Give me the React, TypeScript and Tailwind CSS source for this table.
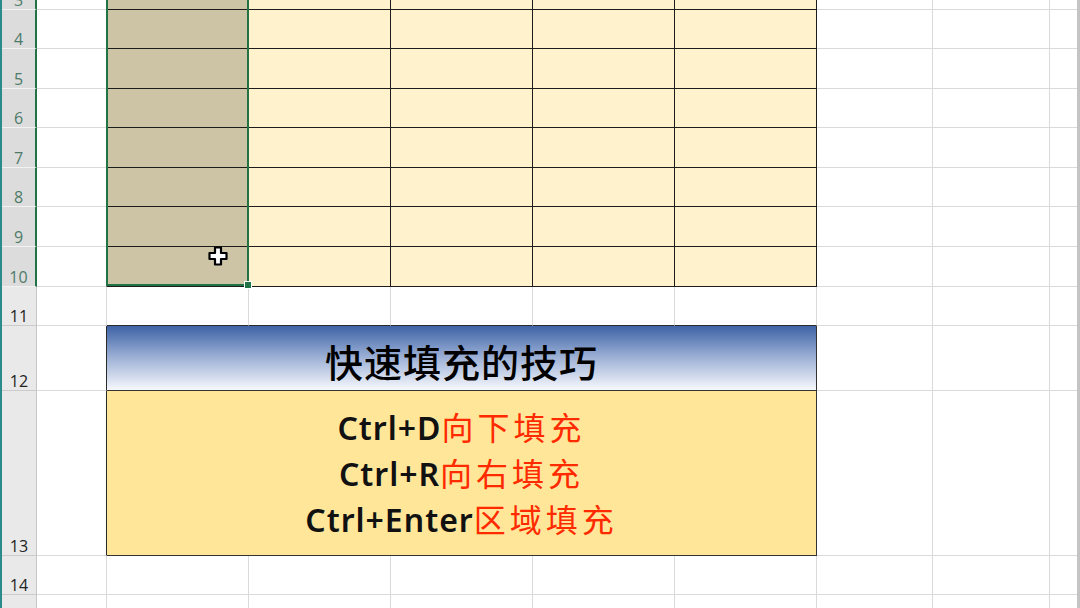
type Row = { n: number; h: number; sel?: boolean };

const rows: Row[] = [
  { n: 3, h: 40, sel: true },
  { n: 4, h: 39, sel: true },
  { n: 5, h: 40, sel: true },
  { n: 6, h: 39, sel: true },
  { n: 7, h: 40, sel: true },
  { n: 8, h: 39, sel: true },
  { n: 9, h: 40, sel: true },
  { n: 10, h: 40, sel: true },
  { n: 11, h: 39 },
  { n: 12, h: 65 },
  { n: 13, h: 165 },
  { n: 14, h: 39 },
  { n: 15, h: 40 },
];

const cols = [1, 2, 3, 4, 5, 6, 7, 8, 9];

const RowHeader = ({ row }: { row: Row }) => (
  <div
    className={
      row.sel
        ? "flex items-end justify-center pb-[1px] bg-[#dcdcdc] border-r-2 border-r-[#217346] border-b border-b-[#f2f2f2] text-[#4d7a68] text-[16px] leading-none"
        : "flex items-end justify-center pb-[1px] bg-[#e9e9e9] border-r border-r-[#c6c6c6] border-b border-b-[#cbcbcb] text-[#222] text-[16px] leading-none"
    }
    style={{ fontFamily: '"Open Sans", "Noto Sans", sans-serif' }}
  >
    {row.n}
  </div>
);

function cellClass(r: number, c: number) {
  const inTable = r >= 3 && r <= 10;
  if (inTable && c >= 2 && c <= 6) {
    return c === 2
      ? "bg-[#cdc4a6] border-r border-b border-[#1c1c1c]"
      : "bg-[#fff2cc] border-r border-b border-[#1c1c1c]";
  }
  if (c === 1 && r >= 3 && r <= 13 && r !== 11) {
    return "border-r border-r-[#2a2a2a] border-b border-b-[#dadada]";
  }
  if (r === 11 && c >= 2 && c <= 6) {
    return "border-r border-r-[#dadada] border-b border-b-[#2a2a2a]";
  }
  if (c === 9) return "border-b border-[#dadada]";
  return "border-r border-b border-[#dadada]";
}

const Banner = () => (
  <div
    className="col-span-5 flex items-center justify-center border-r border-b border-[#333] bg-gradient-to-b from-[#3e63a6] via-[#9fb2d6] to-[#f7f8fc] text-[38px] font-medium tracking-[1px] text-black pt-[4px]"
    style={{ fontFamily: '"Noto Sans CJK SC", sans-serif' }}
  >
    快速填充的技巧
  </div>
);

const Line = ({ k, t }: { k: string; t: string }) => (
  <div className="flex items-baseline">
    <span
      className="font-semibold text-[32px] tracking-[1px] text-[#111]"
      style={{ fontFamily: '"Noto Sans", sans-serif' }}
    >
      {k}
    </span>
    <span
      className="text-[32px] tracking-[4px] text-[#ff2a00]"
      style={{ fontFamily: '"Noto Sans CJK SC", sans-serif' }}
    >
      {t}
    </span>
  </div>
);

const Tips = () => (
  <div className="col-span-5 flex flex-col items-center justify-center border-r border-b border-[#333] bg-[#ffe699] leading-[45px]">
    <Line k="Ctrl+D" t="向下填充" />
    <Line k="Ctrl+R" t="向右填充" />
    <Line k="Ctrl+Enter" t="区域填充" />
  </div>
);

export default function App() {
  return (
    <div className="w-[1080px] h-[608px] overflow-hidden bg-white flex">
      <div className="w-[2px] bg-[#2a8a8c]" />
      <div className="relative flex-1 self-start -mt-[30px]">
        <div className="grid grid-cols-[35px_70px_142px_142px_142px_142px_142px_116px_117px_1fr] grid-rows-[40px_39px_40px_39px_40px_39px_40px_40px_39px_65px_165px_39px_40px]">
          {rows.map((row) =>
            [
              <RowHeader key={`h${row.n}`} row={row} />,
              ...cols.flatMap((c) => {
                if (row.n === 12 || row.n === 13) {
                  if (c === 2) return [row.n === 12 ? <Banner key={`b${row.n}`} /> : <Tips key={`t${row.n}`} />];
                  if (c > 2 && c <= 6) return [];
                }
                return [<div key={`${row.n}-${c}`} className={cellClass(row.n, c)} />];
              }),
            ]
          )}
        </div>

        {/* selection on column B */}
        <div className="absolute left-[104px] top-0 w-[143px] h-[316px] border-2 border-[#217346] pointer-events-none">
          <div className="absolute right-[-5px] bottom-[-5px] w-[8px] h-[8px] bg-[#217346] border border-white" />
          <svg className="absolute left-[100px] top-[274px]" width="20" height="20" viewBox="0 0 20 20">
            <polygon
              points="7,1.5 13,1.5 13,7 18.5,7 18.5,13 13,13 13,18.5 7,18.5 7,13 1.5,13 1.5,7 7,7"
              fill="white"
              stroke="black"
              strokeWidth="2.2"
              strokeLinejoin="round"
            />
          </svg>
        </div>
      </div>
      <div className="w-[3px] bg-[#c4c4c4]" />
    </div>
  );
}
